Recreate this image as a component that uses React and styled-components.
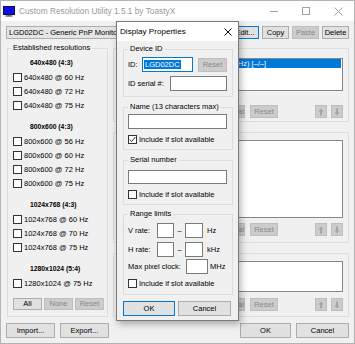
import React from 'react'
import styled, { createGlobalStyle } from 'styled-components'

const GlobalStyle = createGlobalStyle`
  html, body { margin: 0; padding: 0; background: #f0f0f0; }
  body {
    font-family: "Liberation Sans", Arial, sans-serif;
    font-size: 7.5px;
    color: #000;
  }
  * { box-sizing: border-box; }
`

const established = [
    { title: '640x480 (4:3)', rates: ['640x480 @ 60 Hz', '640x480 @ 72 Hz', '640x480 @ 75 Hz'] },
    { title: '800x600 (4:3)', rates: ['800x600 @ 56 Hz', '800x600 @ 60 Hz', '800x600 @ 72 Hz', '800x600 @ 75 Hz'] },
    { title: '1024x768 (4:3)', rates: ['1024x768 @ 60 Hz', '1024x768 @ 70 Hz', '1024x768 @ 75 Hz'] },
    { title: '1280x1024 (5:4)', rates: ['1280x1024 @ 75 Hz'] },
]

function AppIcon() {
    return (
        <svg width="12" height="11" viewBox="0 0 12 11">
            <rect x="0.5" y="0.5" width="11" height="8" fill="#1010e0" stroke="#0b0b5a" />
            <rect x="4.5" y="8.5" width="3" height="1" fill="#333" />
            <rect x="2.5" y="9.5" width="7" height="1" fill="#333" />
        </svg>
    )
}

function Arrow({ down }) {
    return (
        <svg width="6" height="8" viewBox="0 0 6 8" style={down ? { transform: 'rotate(180deg)' } : undefined}>
            <path d="M3 0.5 L5.5 3.5 H4 V7.5 H2 V3.5 H0.5 Z" fill="#a6a6a6" />
        </svg>
    )
}

function CheckBox({ checked, children }) {
    return (
        <CheckRow>
            <Box>
                {checked && (
                    <svg width="7" height="7" viewBox="0 0 7 7">
                        <path d="M0.8 3.6 L2.6 5.6 L6.3 1" stroke="#333" strokeWidth="1" fill="none" />
                    </svg>
                )}
            </Box>
            <span>{children}</span>
        </CheckRow>
    )
}

function ListGroup({ legend, height, listHeight, gapTop, gapMid, selected }) {
    return (
        <Group $height={height} $pt={gapTop}>
            <Legend>{legend}</Legend>
            <ListBox $height={listHeight}>
                {selected && <Selected>{selected}</Selected>}
            </ListBox>
            <GroupButtons $mt={gapMid}>
                <Button $w={27} disabled>Add...</Button>
                <Button $w={27} disabled>Edit...</Button>
                <Button $w={27} disabled>Delete</Button>
                <Button $w={30} disabled>Delete all</Button>
                <Button $w={28} disabled>Reset</Button>
                <Arrows>
                    <Button $w={12} disabled><Arrow /></Button>
                    <Button $w={12} disabled><Arrow down /></Button>
                </Arrows>
            </GroupButtons>
        </Group>
    )
}

export default function App() {
    return (
        <>
            <GlobalStyle />
            <Window>
                <TitleBar>
                    <AppIcon />
                    <Title>Custom Resolution Utility 1.5.1 by ToastyX</Title>
                    <Control>
                        <svg width="8" height="8" viewBox="0 0 8 8"><path d="M0 4.5 H8" stroke="#a0a0a0" /></svg>
                    </Control>
                    <Control>
                        <svg width="8" height="8" viewBox="0 0 8 8"><rect x="0.5" y="0.5" width="7" height="7" fill="none" stroke="#a0a0a0" /></svg>
                    </Control>
                    <Control>
                        <svg width="9" height="9" viewBox="0 0 9 9"><path d="M0.5 0.5 L8.5 8.5 M8.5 0.5 L0.5 8.5" stroke="#a0a0a0" /></svg>
                    </Control>
                </TitleBar>

                <Body>
                    <Toolbar>
                        <Combo>LGD02DC - Generic PnP Monitor</Combo>
                        <Button $w={28} $default>Edit...</Button>
                        <Button $w={27}>Copy</Button>
                        <Button $w={27} disabled>Paste</Button>
                        <Button $w={27}>Delete</Button>
                    </Toolbar>

                    <Columns>
                        <Group $height={274} $width={101} $pt={3} $pl={3}>
                            <Legend>Established resolutions</Legend>
                            {established.map((section, i) => (
                                <Section key={section.title} $first={i === 0}>
                                    <Heading>{section.title}</Heading>
                                    {section.rates.map(rate => (
                                        <Indent key={rate}><CheckBox>{rate}</CheckBox></Indent>
                                    ))}
                                </Section>
                            ))}
                            <SmallButtons>
                                <Button $w={29} $h={12}>All</Button>
                                <Button $w={29} $h={12} disabled>None</Button>
                                <Button $w={29} $h={12} disabled>Reset</Button>
                            </SmallButtons>
                        </Group>

                        <RightColumn>
                            <ListGroup legend="Detailed resolutions" height={79} listHeight={33} gapTop={5} gapMid={14}
                                selected="2560x1080 @ 60.00 Hz (185.58 MHz) [–/–]" />
                            <ListGroup legend="Standard resolutions" height={116} listHeight={78} gapTop={3} gapMid={5} />
                            <ListGroup legend="Extension blocks" height={69} listHeight={31} gapTop={3} gapMid={6} />
                        </RightColumn>
                    </Columns>

                    <BottomRow>
                        <ButtonPair>
                            <Button $w={49} $h={15}>Import...</Button>
                            <Button $w={49} $h={15}>Export...</Button>
                        </ButtonPair>
                        <ButtonPair>
                            <Button $w={51} $h={15}>OK</Button>
                            <Button $w={53} $h={15}>Cancel</Button>
                        </ButtonPair>
                    </BottomRow>
                </Body>

                <Dialog>
                    <DialogTitleBar>
                        <DialogTitle>Display Properties</DialogTitle>
                        <DialogClose>
                            <svg width="8" height="8" viewBox="0 0 8 8"><path d="M0.5 0.5 L7.5 7.5 M7.5 0.5 L0.5 7.5" stroke="#111" /></svg>
                        </DialogClose>
                    </DialogTitleBar>

                    <DialogBody>
                        <Group $height={53} $pt={3} $pl={4} $pr={5}>
                            <Legend>Device ID</Legend>
                            <FieldRow $h={15}>
                                <Label $w={14}>ID:</Label>
                                <Input $w={51} $focus><Highlight>LGD02DC</Highlight></Input>
                                <Button $w={29} $h={14} $push disabled>Reset</Button>
                            </FieldRow>
                            <FieldRow $h={14} $mt={4}>
                                <Label>ID serial #:</Label>
                                <Input $w={57} $push />
                            </FieldRow>
                        </Group>

                        <Group $height={48} $pt={2} $pl={4} $pr={5} $mt={5}>
                            <Legend>Name (13 characters max)</Legend>
                            <Input $h={15} />
                            <CheckLine><CheckBox checked>Include if slot available</CheckBox></CheckLine>
                        </Group>

                        <Group $height={50} $pt={5} $pl={4} $pr={5} $mt={5}>
                            <Legend>Serial number</Legend>
                            <Input $h={14} />
                            <CheckLine><CheckBox>Include if slot available</CheckBox></CheckLine>
                        </Group>

                        <Group $height={86} $pt={4} $pl={4} $pr={5} $mt={4}>
                            <Legend>Range limits</Legend>
                            <FieldRow $h={15}>
                                <Label $w={29}>V rate:</Label>
                                <Input $w={17} />
                                <Dash>–</Dash>
                                <Input $w={18} />
                                <Unit>Hz</Unit>
                            </FieldRow>
                            <FieldRow $h={15} $mt={4}>
                                <Label $w={29}>H rate:</Label>
                                <Input $w={17} />
                                <Dash>–</Dash>
                                <Input $w={18} />
                                <Unit>kHz</Unit>
                            </FieldRow>
                            <FieldRow $h={14} $mt={2}>
                                <Label $w={58}>Max pixel clock:</Label>
                                <Input $w={22} />
                                <Unit $ml={2}>MHz</Unit>
                            </FieldRow>
                            <CheckLine><CheckBox>Include if slot available</CheckBox></CheckLine>
                        </Group>

                        <DialogButtons>
                            <Button $w={52} $h={15} $default>OK</Button>
                            <Button $w={53} $h={15}>Cancel</Button>
                        </DialogButtons>
                    </DialogBody>
                </Dialog>
            </Window>
        </>
    )
}

const Window = styled.div`
    position: relative;
    width: 355px;
    height: 344px;
    border: 1px solid #b4b4b4;
    background: #f0f0f0;
    display: flex;
    flex-direction: column;
    overflow: hidden;
`

const TitleBar = styled.div`
    height: 20px;
    background: #fff;
    display: flex;
    align-items: center;
    padding-left: 2px;
    flex-shrink: 0;
`

const Title = styled.div`
    flex: 1;
    margin-left: 4px;
    font-size: 8.3px;
    color: #999;
    white-space: nowrap;
`

const Control = styled.div`
    width: 32px;
    height: 20px;
    display: flex;
    align-items: center;
    justify-content: center;
`

const Body = styled.div`
    padding: 5px 5px 0 5px;
    display: flex;
    flex-direction: column;
`

const Toolbar = styled.div`
    display: flex;
    align-items: center;
    gap: 3px;
    height: 13px;
`

const Combo = styled.div`
    flex: 1;
    height: 13px;
    line-height: 11px;
    padding-left: 2px;
    background: #e5e5e5;
    border: 1px solid #adadad;
    white-space: nowrap;
    overflow: hidden;
`

const Button = styled.button`
    width: ${p => p.$w}px;
    height: ${p => p.$h || 13}px;
    margin-left: ${p => (p.$push ? 'auto' : '0')};
    padding: 0;
    font-family: inherit;
    font-size: 7.5px;
    line-height: 1;
    color: ${p => (p.disabled ? '#8a8a8a' : '#000')};
    background: ${p => (p.disabled ? '#cccccc' : '#e1e1e1')};
    border: 1px solid ${p => (p.$default ? '#0078d7' : p.disabled ? '#bfbfbf' : '#adadad')};
    display: flex;
    align-items: center;
    justify-content: center;
    white-space: nowrap;
    overflow: hidden;
    flex-shrink: 0;
`

const Columns = styled.div`
    display: flex;
    gap: 5px;
    margin-top: 4px;
    padding-left: 1px;
`

const Group = styled.fieldset`
    margin: ${p => p.$mt || 0}px 0 0 0;
    min-width: 0;
    width: ${p => (p.$width ? `${p.$width}px` : 'auto')};
    height: ${p => p.$height}px;
    border: 1px solid #dcdcdc;
    padding: ${p => p.$pt || 0}px ${p => p.$pr ?? 5}px 0 ${p => p.$pl ?? 5}px;
    display: flex;
    flex-direction: column;
    flex-shrink: 0;
`

const Legend = styled.legend`
    padding: 0 2px;
    line-height: 10px;
    font-size: 7.5px;
    white-space: nowrap;
`

const Section = styled.div`
    margin-top: ${p => (p.$first ? 0 : 8)}px;
`

const Heading = styled.div`
    height: 14px;
    line-height: 14px;
    padding-left: 19px;
    font-weight: bold;
    font-size: 6.8px;
`

const Indent = styled.div`
    padding-left: 2px;
`

const CheckRow = styled.div`
    height: 14px;
    display: flex;
    align-items: center;
    gap: 2px;
    white-space: nowrap;
`

const Box = styled.span`
    width: 9px;
    height: 9px;
    border: 1px solid #333;
    background: #fff;
    display: flex;
    align-items: center;
    justify-content: center;
    flex-shrink: 0;
`

const SmallButtons = styled.div`
    display: flex;
    gap: 2px;
    margin-top: 8px;
    padding-left: 2px;
`

const RightColumn = styled.div`
    flex: 1;
    display: flex;
    flex-direction: column;
    gap: 5px;
`

const ListBox = styled.div`
    height: ${p => p.$height}px;
    background: #fff;
    border: 1px solid #828790;
    padding: 0 1px;
    overflow: hidden;
`

const Selected = styled.div`
    height: 9px;
    line-height: 9px;
    padding-left: 2px;
    background: #0078d7;
    color: #fff;
    white-space: nowrap;
`

const GroupButtons = styled.div`
    display: flex;
    gap: 5px;
    margin-top: ${p => p.$mt}px;
`

const Arrows = styled.div`
    display: flex;
    gap: 4px;
    margin-left: auto;
`

const BottomRow = styled.div`
    display: flex;
    justify-content: space-between;
    margin-top: 6px;
`

const ButtonPair = styled.div`
    display: flex;
    gap: 5px;
`

const Dialog = styled.div`
    position: absolute;
    left: 115px;
    top: 20px;
    width: 123px;
    height: 300px;
    border: 1px solid #7a7a7a;
    background: #f0f0f0;
    box-shadow: 2px 3px 7px rgba(0, 0, 0, 0.3);
    display: flex;
    flex-direction: column;
`

const DialogTitleBar = styled.div`
    height: 19px;
    background: #fff;
    display: flex;
    align-items: center;
    padding-left: 3px;
    flex-shrink: 0;
`

const DialogTitle = styled.div`
    flex: 1;
    font-size: 8.1px;
    white-space: nowrap;
`

const DialogClose = styled.div`
    width: 21px;
    height: 19px;
    display: flex;
    align-items: center;
    justify-content: center;
`

const DialogBody = styled.div`
    padding: 3px 5px 0 6px;
    display: flex;
    flex-direction: column;
`

const FieldRow = styled.div`
    height: ${p => p.$h}px;
    margin-top: ${p => p.$mt || 0}px;
    display: flex;
    align-items: center;
`

const Label = styled.span`
    width: ${p => (p.$w ? `${p.$w}px` : 'auto')};
    white-space: nowrap;
    flex-shrink: 0;
`

const Input = styled.div`
    width: ${p => (p.$w ? `${p.$w}px` : '100%')};
    height: ${p => p.$h || 15}px;
    margin-left: ${p => (p.$push ? 'auto' : '0')};
    background: #fff;
    border: 1px solid ${p => (p.$focus ? '#0078d7' : '#7a7a7a')};
    display: flex;
    align-items: center;
    padding-left: 1px;
    flex-shrink: 0;
`

const Highlight = styled.span`
    background: #0078d7;
    color: #fff;
    line-height: 9px;
    padding: 0 1px;
`

const Dash = styled.span`
    width: 11px;
    text-align: center;
    flex-shrink: 0;
`

const Unit = styled.span`
    margin-left: ${p => p.$ml ?? 4}px;
`

const CheckLine = styled.div`
    margin-top: 4px;
    height: 12px;
    display: flex;
    align-items: center;
`

const DialogButtons = styled.div`
    display: flex;
    gap: 3px;
    margin-top: 6px;
`
